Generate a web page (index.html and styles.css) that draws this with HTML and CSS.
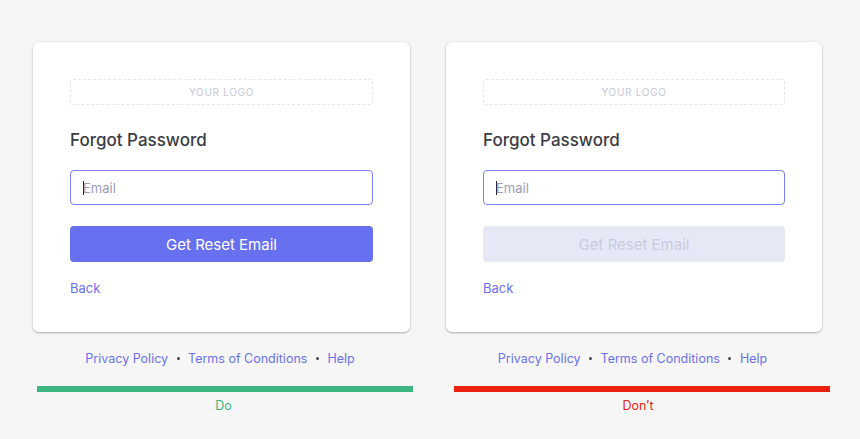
FILE: index.html
```
<!DOCTYPE html>
<html>
<head>
<meta charset="utf-8">
<link rel="stylesheet" href="styles.css">
</head>
<body>
<div class="page">
  <div class="col">
    <div class="card">
      <div class="logo">YOUR LOGO</div>
      <div class="title">Forgot Password</div>
      <div class="input"><span class="caret"></span><span class="ph">Email</span></div>
      <div class="btn">Get Reset Email</div>
      <div class="back">Back</div>
    </div>
    <div class="links"><span>Privacy Policy</span><i class="dot"></i><span>Terms of Conditions</span><i class="dot"></i><span>Help</span></div>
    <div class="bar bar-do"></div>
    <div class="label label-do">Do</div>
  </div>
  <div class="col">
    <div class="card">
      <div class="logo">YOUR LOGO</div>
      <div class="title">Forgot Password</div>
      <div class="input"><span class="caret"></span><span class="ph">Email</span></div>
      <div class="btn btn-disabled">Get Reset Email</div>
      <div class="back">Back</div>
    </div>
    <div class="links"><span>Privacy Policy</span><i class="dot"></i><span>Terms of Conditions</span><i class="dot"></i><span>Help</span></div>
    <div class="bar bar-dont"></div>
    <div class="label label-dont">Don’t</div>
  </div>
</div>
</body>
</html>
```
FILE: styles.css
```
* { box-sizing: border-box; }
html, body { margin: 0; padding: 0; }
body {
  background: #f6f6f6;
  font-family: Inter, "Open Sans", sans-serif;
  width: 860px;
  height: 439px;
  overflow: hidden;
}
.page {
  display: grid;
  grid-template-columns: 377px 376px;
  column-gap: 36px;
  padding: 42px 0 0 33px;
}
.col { display: flex; flex-direction: column; }
.card {
  background: #fff;
  border-radius: 6px;
  box-shadow: 0 1px 2px rgba(90, 92, 130, 0.45), 0 0 3px rgba(0, 0, 0, 0.08);
  padding: 37px 37px 36px;
  height: 290px;
  display: flex;
  flex-direction: column;
}
.logo {
  height: 26px;
  border: 1px dashed #e4e6ee;
  border-radius: 3px;
  display: flex;
  align-items: center;
  justify-content: center;
  font-size: 10px;
  letter-spacing: 0.7px;
  color: #c5c8d6;
}
.title {
  margin-top: 25px;
  font-size: 17px;
  line-height: 20px;
  color: #3b3c44;
  font-weight: 500;
}
.input {
  margin-top: 20px;
  height: 35px;
  border: 1px solid #7c80f0;
  border-radius: 4px;
  display: flex;
  align-items: center;
  padding-left: 12px;
}
.caret {
  width: 1px;
  height: 14px;
  background: #222;
}
.ph {
  font-size: 13px;
  color: #9b9db2;
  margin-left: -1px;
}
.btn {
  margin-top: 21px;
  height: 36px;
  border-radius: 4px;
  background: #6770ee;
  color: #fff;
  font-size: 15px;
  display: flex;
  align-items: center;
  justify-content: center;
}
.btn-disabled {
  background: #e6e9f5;
  color: #c8cbdf;
}
.back {
  margin-top: 18px;
  font-size: 13px;
  line-height: 16px;
  color: #6a6fef;
}
.links {
  margin-top: 18px;
  height: 16px;
  display: flex;
  align-items: center;
  justify-content: center;
  font-size: 12.5px;
  color: #6b72e8;
  padding-right: 3px;
}
.dot {
  width: 3px;
  height: 3px;
  border-radius: 50%;
  background: #45464f;
  margin: 0 8.5px;
}
.bar { margin-top: 20px; height: 6px; width: 376px; }
.bar-do { background: #3bb67e; margin-left: 4px; }
.bar-dont { background: #e8220f; margin-left: 8px; }
.label {
  margin-top: 7px;
  font-size: 12.5px;
  line-height: 14px;
  text-align: center;
}
.label-do { color: #3bb67e; margin-left: 4px; }
.label-dont { color: #e8220f; margin-left: 8px; }
```
